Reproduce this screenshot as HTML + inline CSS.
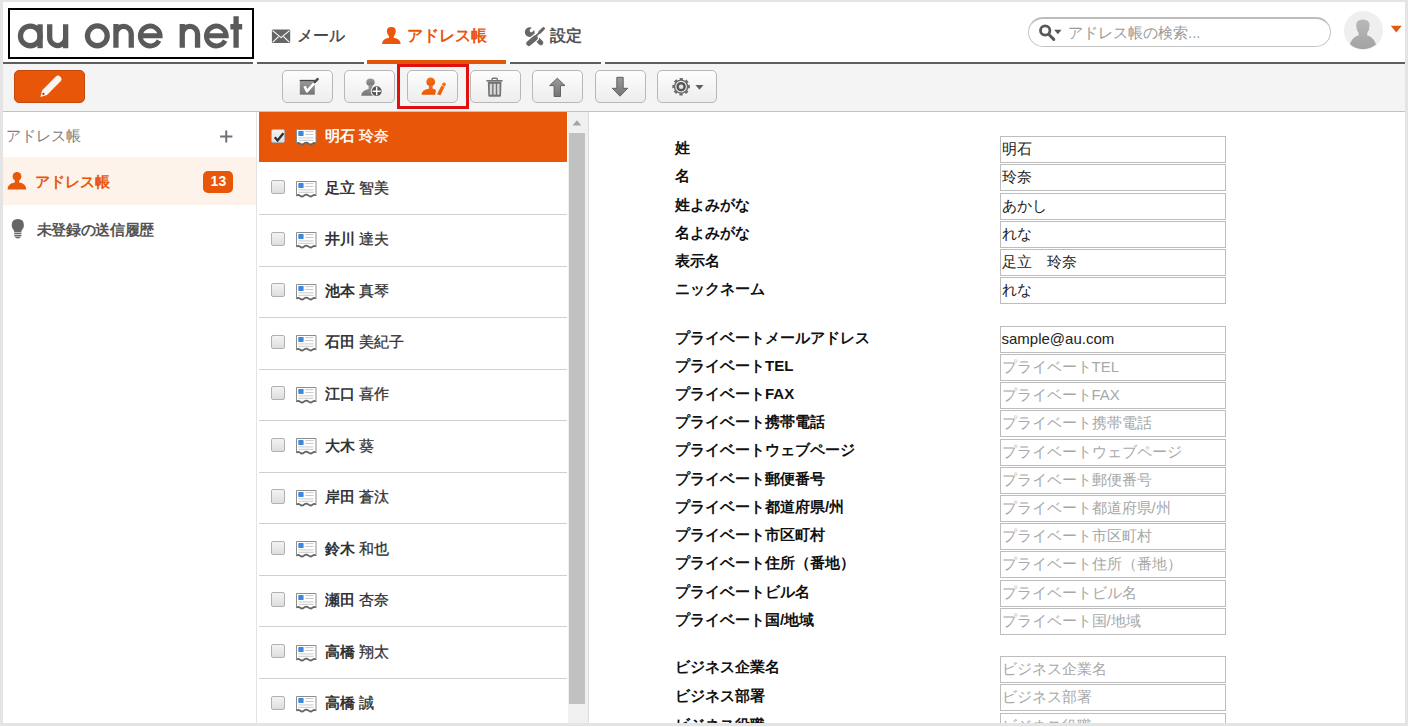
<!DOCTYPE html>
<html><head><meta charset="utf-8">
<style>
*{box-sizing:border-box;margin:0;padding:0}
html,body{width:1409px;height:727px;overflow:hidden;background:#fff;font-family:"Liberation Sans",sans-serif;}
#app{position:absolute;left:0;top:0;width:1409px;height:727px;background:#fff;clip-path:inset(2px 4px 4px 3px)}
#app>div,#app>svg{position:absolute}
/* header */
#logo{left:8px;top:7.5px;width:245.5px;height:51px;border:2.5px solid #000;background:#fff}
.uline{top:61.7px;height:2.2px;background:#5e5e5e}
.tab{top:27.3px;font-size:16px;color:#555;white-space:nowrap;line-height:18px}
#search{left:1028px;top:17px;width:303px;height:30px;border:1px solid #c4c4c4;border-top:2px solid #bcbcbc;border-radius:15px;background:#fff}
#sph{left:1068px;top:24px;font-size:15px;line-height:18px;color:#9a9a9a;white-space:nowrap}
#avatar{left:1343.5px;top:10.5px;width:39px;height:39px;border-radius:50%;background:#efefef;overflow:hidden}
/* toolbar */
#toolbar{left:0;top:64px;width:1409px;height:48px;background:#f4f4f4;border-bottom:1px solid #c2c2c2}
.btn{top:70.3px;width:51px;height:32.5px;border:1px solid #b8b8b8;border-radius:5px;background:linear-gradient(#fdfdfd,#ededed)}
#compose{left:14.3px;top:70.2px;width:71px;height:32.6px;background:#e8560a;border:1px solid #c24a0b;border-radius:5px}
#redbox{left:397.4px;top:64.2px;width:71.4px;height:44.4px;border:3px solid #e01010}
/* sidebar */
#sidebar{left:0;top:112px;width:257px;height:615px;background:#fff;border-right:1px solid #e4e4e4}
#sbsel{left:3px;top:157px;width:253px;height:47.5px;background:#fdf3eb}
.sbt{font-size:15px;line-height:18px;white-space:nowrap}
#badge{left:203.3px;top:171.2px;width:30.2px;height:21.4px;background:#e8560a;border-radius:5px;color:#fff;font-weight:bold;font-size:14px;line-height:21.4px;text-align:center}
/* list */
#list{left:257px;top:112px;width:332px;height:615px;background:#fff;border-right:1.5px solid #dcdcdc}
.row{left:258.5px;width:308px;height:51.55px;border-bottom:1px solid #d0d0d0;background:#fff}
.row.sel{background:#e8560a;border-bottom-color:#e8560a;height:50px}
.cb{position:absolute;left:12.5px;top:16.5px;width:14px;height:14.2px;border:1px solid #b0b0b0;border-radius:2px;background:linear-gradient(#f3f3f3,#dedede)}
.card{position:absolute;left:37.3px;top:17px}
.nm{position:absolute;left:66px;top:15.3px;font-size:15px;line-height:18px;color:#333;white-space:nowrap}
.row.sel .nm{color:#fff}
.nm b{font-weight:bold}
.nm i{font-style:normal;-webkit-text-stroke:0.3px currentColor}
#sbtrack{left:567.5px;top:112px;width:20px;height:611px;background:#f0f0f0}
#sbthumb{left:569px;top:133.2px;width:15.8px;height:571.2px;background:#c1c1c1}
/* form */
.lbl{left:675px;font-size:15px;font-weight:bold;color:#111;line-height:18px;white-space:nowrap}
.inp{left:1000px;width:225.5px;height:27px;border:1px solid #bdbdbd;background:#fff;font-size:15px;line-height:23.5px;padding-left:0.5px;color:#222;white-space:nowrap;overflow:hidden}
.ph{color:#a8a8a8}
</style></head>
<body>
<div style="position:absolute;left:0;top:0;width:1408px;height:726px;background:#e4e4e4"></div>
<div id="app">
  <div id="logo"></div>
  <div class="uline" style="left:0;width:253px"></div>
  <div class="uline" style="left:257px;width:106.5px"></div>
  <div class="uline" style="left:367.3px;width:138.7px;background:#e25508;height:4px;top:60px"></div>
  <div class="uline" style="left:510px;width:90.5px"></div>
  <div class="uline" style="left:604.5px;width:801px"></div>
  <div class="tab" style="left:297px;color:#444;-webkit-text-stroke:0.35px #444">メール</div>
  <div class="tab" style="left:406.8px;color:#e8570a;font-weight:bold">アドレス帳</div>
  <div class="tab" style="left:549.5px;font-weight:bold">設定</div>
  <div id="search"></div>
  <div id="sph">アドレス帳の検索...</div>
  <div id="avatar"></div>

  <div id="toolbar"></div>
  <div id="compose"></div>
  <div class="btn" style="left:281.8px"></div>
  <div class="btn" style="left:344.3px"></div>
  <div class="btn" style="left:407px"></div>
  <div class="btn" style="left:470.2px"></div>
  <div class="btn" style="left:532.4px"></div>
  <div class="btn" style="left:595.1px"></div>
  <div class="btn" style="left:657.3px;width:59.6px"></div>
  <div id="redbox"></div>

  <div id="sidebar"></div>
  <div id="sbsel"></div>
  <div class="sbt" style="left:6px;top:127px;color:#808080">アドレス帳</div>
  <div class="sbt" style="left:35px;top:173px;color:#e8570a;font-weight:bold">アドレス帳</div>
  <div class="sbt" style="left:36.6px;top:221px;color:#555;font-weight:bold;letter-spacing:-0.3px">未登録の送信履歴</div>
  <div id="badge">13</div>

  <div id="list"></div>
<div class="row sel" style="top:112.00px"><div class="cb"><svg width="14" height="14" viewBox="0 0 14 14" style="position:absolute;left:0;top:0"><path d="M2.8,7.2L5.6,10.4L11.4,3.2" fill="none" stroke="#2e2e2e" stroke-width="2.3"/></svg></div><svg class="card" width="21" height="17" viewBox="0 0 21 17"><path d="M0.5,0.5H20V14.8Q18.5,13 16.6,14.6Q14.6,16.4 12.6,14.6Q10.3,12.6 8,14.6Q6,16.4 4,14.6Q2,13 0.5,14.8Z" fill="#fff" stroke="#8c8c8c" stroke-width="1"/><path d="M0.8,14.8Q2,13 4,14.6Q6,16.4 8,14.6Q10.3,12.6 12.6,14.6Q14.6,16.4 16.6,14.6Q18.5,13 19.7,14.8" fill="none" stroke="#666" stroke-width="1.8"/><rect x="2.3" y="2.1" width="5.3" height="4.8" rx="0.6" fill="#3b88dc"/><path d="M9.2,2.6H17.5M9.2,5.5H17.5M2.3,8.9H17.5M2.3,11.3H17.5" stroke="#c4c4c4" stroke-width="0.9"/></svg><div class="nm"><b>明石</b> <i>玲奈</i></div></div>
<div class="row" style="top:163.55px"><div class="cb"></div><svg class="card" width="21" height="17" viewBox="0 0 21 17"><path d="M0.5,0.5H20V14.8Q18.5,13 16.6,14.6Q14.6,16.4 12.6,14.6Q10.3,12.6 8,14.6Q6,16.4 4,14.6Q2,13 0.5,14.8Z" fill="#fff" stroke="#8c8c8c" stroke-width="1"/><path d="M0.8,14.8Q2,13 4,14.6Q6,16.4 8,14.6Q10.3,12.6 12.6,14.6Q14.6,16.4 16.6,14.6Q18.5,13 19.7,14.8" fill="none" stroke="#666" stroke-width="1.8"/><rect x="2.3" y="2.1" width="5.3" height="4.8" rx="0.6" fill="#3b88dc"/><path d="M9.2,2.6H17.5M9.2,5.5H17.5M2.3,8.9H17.5M2.3,11.3H17.5" stroke="#c4c4c4" stroke-width="0.9"/></svg><div class="nm"><b>足立</b> <i>智美</i></div></div>
<div class="row" style="top:215.10px"><div class="cb"></div><svg class="card" width="21" height="17" viewBox="0 0 21 17"><path d="M0.5,0.5H20V14.8Q18.5,13 16.6,14.6Q14.6,16.4 12.6,14.6Q10.3,12.6 8,14.6Q6,16.4 4,14.6Q2,13 0.5,14.8Z" fill="#fff" stroke="#8c8c8c" stroke-width="1"/><path d="M0.8,14.8Q2,13 4,14.6Q6,16.4 8,14.6Q10.3,12.6 12.6,14.6Q14.6,16.4 16.6,14.6Q18.5,13 19.7,14.8" fill="none" stroke="#666" stroke-width="1.8"/><rect x="2.3" y="2.1" width="5.3" height="4.8" rx="0.6" fill="#3b88dc"/><path d="M9.2,2.6H17.5M9.2,5.5H17.5M2.3,8.9H17.5M2.3,11.3H17.5" stroke="#c4c4c4" stroke-width="0.9"/></svg><div class="nm"><b>井川</b> <i>達夫</i></div></div>
<div class="row" style="top:266.65px"><div class="cb"></div><svg class="card" width="21" height="17" viewBox="0 0 21 17"><path d="M0.5,0.5H20V14.8Q18.5,13 16.6,14.6Q14.6,16.4 12.6,14.6Q10.3,12.6 8,14.6Q6,16.4 4,14.6Q2,13 0.5,14.8Z" fill="#fff" stroke="#8c8c8c" stroke-width="1"/><path d="M0.8,14.8Q2,13 4,14.6Q6,16.4 8,14.6Q10.3,12.6 12.6,14.6Q14.6,16.4 16.6,14.6Q18.5,13 19.7,14.8" fill="none" stroke="#666" stroke-width="1.8"/><rect x="2.3" y="2.1" width="5.3" height="4.8" rx="0.6" fill="#3b88dc"/><path d="M9.2,2.6H17.5M9.2,5.5H17.5M2.3,8.9H17.5M2.3,11.3H17.5" stroke="#c4c4c4" stroke-width="0.9"/></svg><div class="nm"><b>池本</b> <i>真琴</i></div></div>
<div class="row" style="top:318.20px"><div class="cb"></div><svg class="card" width="21" height="17" viewBox="0 0 21 17"><path d="M0.5,0.5H20V14.8Q18.5,13 16.6,14.6Q14.6,16.4 12.6,14.6Q10.3,12.6 8,14.6Q6,16.4 4,14.6Q2,13 0.5,14.8Z" fill="#fff" stroke="#8c8c8c" stroke-width="1"/><path d="M0.8,14.8Q2,13 4,14.6Q6,16.4 8,14.6Q10.3,12.6 12.6,14.6Q14.6,16.4 16.6,14.6Q18.5,13 19.7,14.8" fill="none" stroke="#666" stroke-width="1.8"/><rect x="2.3" y="2.1" width="5.3" height="4.8" rx="0.6" fill="#3b88dc"/><path d="M9.2,2.6H17.5M9.2,5.5H17.5M2.3,8.9H17.5M2.3,11.3H17.5" stroke="#c4c4c4" stroke-width="0.9"/></svg><div class="nm"><b>石田</b> <i>美紀子</i></div></div>
<div class="row" style="top:369.75px"><div class="cb"></div><svg class="card" width="21" height="17" viewBox="0 0 21 17"><path d="M0.5,0.5H20V14.8Q18.5,13 16.6,14.6Q14.6,16.4 12.6,14.6Q10.3,12.6 8,14.6Q6,16.4 4,14.6Q2,13 0.5,14.8Z" fill="#fff" stroke="#8c8c8c" stroke-width="1"/><path d="M0.8,14.8Q2,13 4,14.6Q6,16.4 8,14.6Q10.3,12.6 12.6,14.6Q14.6,16.4 16.6,14.6Q18.5,13 19.7,14.8" fill="none" stroke="#666" stroke-width="1.8"/><rect x="2.3" y="2.1" width="5.3" height="4.8" rx="0.6" fill="#3b88dc"/><path d="M9.2,2.6H17.5M9.2,5.5H17.5M2.3,8.9H17.5M2.3,11.3H17.5" stroke="#c4c4c4" stroke-width="0.9"/></svg><div class="nm"><b>江口</b> <i>喜作</i></div></div>
<div class="row" style="top:421.30px"><div class="cb"></div><svg class="card" width="21" height="17" viewBox="0 0 21 17"><path d="M0.5,0.5H20V14.8Q18.5,13 16.6,14.6Q14.6,16.4 12.6,14.6Q10.3,12.6 8,14.6Q6,16.4 4,14.6Q2,13 0.5,14.8Z" fill="#fff" stroke="#8c8c8c" stroke-width="1"/><path d="M0.8,14.8Q2,13 4,14.6Q6,16.4 8,14.6Q10.3,12.6 12.6,14.6Q14.6,16.4 16.6,14.6Q18.5,13 19.7,14.8" fill="none" stroke="#666" stroke-width="1.8"/><rect x="2.3" y="2.1" width="5.3" height="4.8" rx="0.6" fill="#3b88dc"/><path d="M9.2,2.6H17.5M9.2,5.5H17.5M2.3,8.9H17.5M2.3,11.3H17.5" stroke="#c4c4c4" stroke-width="0.9"/></svg><div class="nm"><b>大木</b> <i>葵</i></div></div>
<div class="row" style="top:472.85px"><div class="cb"></div><svg class="card" width="21" height="17" viewBox="0 0 21 17"><path d="M0.5,0.5H20V14.8Q18.5,13 16.6,14.6Q14.6,16.4 12.6,14.6Q10.3,12.6 8,14.6Q6,16.4 4,14.6Q2,13 0.5,14.8Z" fill="#fff" stroke="#8c8c8c" stroke-width="1"/><path d="M0.8,14.8Q2,13 4,14.6Q6,16.4 8,14.6Q10.3,12.6 12.6,14.6Q14.6,16.4 16.6,14.6Q18.5,13 19.7,14.8" fill="none" stroke="#666" stroke-width="1.8"/><rect x="2.3" y="2.1" width="5.3" height="4.8" rx="0.6" fill="#3b88dc"/><path d="M9.2,2.6H17.5M9.2,5.5H17.5M2.3,8.9H17.5M2.3,11.3H17.5" stroke="#c4c4c4" stroke-width="0.9"/></svg><div class="nm"><b>岸田</b> <i>蒼汰</i></div></div>
<div class="row" style="top:524.40px"><div class="cb"></div><svg class="card" width="21" height="17" viewBox="0 0 21 17"><path d="M0.5,0.5H20V14.8Q18.5,13 16.6,14.6Q14.6,16.4 12.6,14.6Q10.3,12.6 8,14.6Q6,16.4 4,14.6Q2,13 0.5,14.8Z" fill="#fff" stroke="#8c8c8c" stroke-width="1"/><path d="M0.8,14.8Q2,13 4,14.6Q6,16.4 8,14.6Q10.3,12.6 12.6,14.6Q14.6,16.4 16.6,14.6Q18.5,13 19.7,14.8" fill="none" stroke="#666" stroke-width="1.8"/><rect x="2.3" y="2.1" width="5.3" height="4.8" rx="0.6" fill="#3b88dc"/><path d="M9.2,2.6H17.5M9.2,5.5H17.5M2.3,8.9H17.5M2.3,11.3H17.5" stroke="#c4c4c4" stroke-width="0.9"/></svg><div class="nm"><b>鈴木</b> <i>和也</i></div></div>
<div class="row" style="top:575.95px"><div class="cb"></div><svg class="card" width="21" height="17" viewBox="0 0 21 17"><path d="M0.5,0.5H20V14.8Q18.5,13 16.6,14.6Q14.6,16.4 12.6,14.6Q10.3,12.6 8,14.6Q6,16.4 4,14.6Q2,13 0.5,14.8Z" fill="#fff" stroke="#8c8c8c" stroke-width="1"/><path d="M0.8,14.8Q2,13 4,14.6Q6,16.4 8,14.6Q10.3,12.6 12.6,14.6Q14.6,16.4 16.6,14.6Q18.5,13 19.7,14.8" fill="none" stroke="#666" stroke-width="1.8"/><rect x="2.3" y="2.1" width="5.3" height="4.8" rx="0.6" fill="#3b88dc"/><path d="M9.2,2.6H17.5M9.2,5.5H17.5M2.3,8.9H17.5M2.3,11.3H17.5" stroke="#c4c4c4" stroke-width="0.9"/></svg><div class="nm"><b>瀬田</b> <i>杏奈</i></div></div>
<div class="row" style="top:627.50px"><div class="cb"></div><svg class="card" width="21" height="17" viewBox="0 0 21 17"><path d="M0.5,0.5H20V14.8Q18.5,13 16.6,14.6Q14.6,16.4 12.6,14.6Q10.3,12.6 8,14.6Q6,16.4 4,14.6Q2,13 0.5,14.8Z" fill="#fff" stroke="#8c8c8c" stroke-width="1"/><path d="M0.8,14.8Q2,13 4,14.6Q6,16.4 8,14.6Q10.3,12.6 12.6,14.6Q14.6,16.4 16.6,14.6Q18.5,13 19.7,14.8" fill="none" stroke="#666" stroke-width="1.8"/><rect x="2.3" y="2.1" width="5.3" height="4.8" rx="0.6" fill="#3b88dc"/><path d="M9.2,2.6H17.5M9.2,5.5H17.5M2.3,8.9H17.5M2.3,11.3H17.5" stroke="#c4c4c4" stroke-width="0.9"/></svg><div class="nm"><b>高橋</b> <i>翔太</i></div></div>
<div class="row" style="top:679.05px"><div class="cb"></div><svg class="card" width="21" height="17" viewBox="0 0 21 17"><path d="M0.5,0.5H20V14.8Q18.5,13 16.6,14.6Q14.6,16.4 12.6,14.6Q10.3,12.6 8,14.6Q6,16.4 4,14.6Q2,13 0.5,14.8Z" fill="#fff" stroke="#8c8c8c" stroke-width="1"/><path d="M0.8,14.8Q2,13 4,14.6Q6,16.4 8,14.6Q10.3,12.6 12.6,14.6Q14.6,16.4 16.6,14.6Q18.5,13 19.7,14.8" fill="none" stroke="#666" stroke-width="1.8"/><rect x="2.3" y="2.1" width="5.3" height="4.8" rx="0.6" fill="#3b88dc"/><path d="M9.2,2.6H17.5M9.2,5.5H17.5M2.3,8.9H17.5M2.3,11.3H17.5" stroke="#c4c4c4" stroke-width="0.9"/></svg><div class="nm"><b>高橋</b> <i>誠</i></div></div>
  <div id="sbtrack"></div>
  <div id="sbthumb"></div>

<div class="lbl" style="top:139.1px">姓</div><div class="inp" style="top:136.2px">明石</div>
<div class="lbl" style="top:167.4px">名</div><div class="inp" style="top:164.4px">玲奈</div>
<div class="lbl" style="top:195.6px">姓よみがな</div><div class="inp" style="top:192.7px">あかし</div>
<div class="lbl" style="top:223.8px">名よみがな</div><div class="inp" style="top:220.9px">れな</div>
<div class="lbl" style="top:252.1px">表示名</div><div class="inp" style="top:249.2px">足立　玲奈</div>
<div class="lbl" style="top:280.4px">ニックネーム</div><div class="inp" style="top:277.4px">れな</div>
<div class="lbl" style="top:328.5px">プライベートメールアドレス</div><div class="inp" style="top:325.6px">sample@au.com</div>
<div class="lbl" style="top:356.7px">プライベートTEL</div><div class="inp ph" style="top:353.8px">プライベートTEL</div>
<div class="lbl" style="top:384.9px">プライベートFAX</div><div class="inp ph" style="top:382.0px">プライベートFAX</div>
<div class="lbl" style="top:413.2px">プライベート携帯電話</div><div class="inp ph" style="top:410.3px">プライベート携帯電話</div>
<div class="lbl" style="top:441.4px">プライベートウェブページ</div><div class="inp ph" style="top:438.5px">プライベートウェブページ</div>
<div class="lbl" style="top:469.6px">プライベート郵便番号</div><div class="inp ph" style="top:466.7px">プライベート郵便番号</div>
<div class="lbl" style="top:497.8px">プライベート都道府県/州</div><div class="inp ph" style="top:494.9px">プライベート都道府県/州</div>
<div class="lbl" style="top:526.0px">プライベート市区町村</div><div class="inp ph" style="top:523.1px">プライベート市区町村</div>
<div class="lbl" style="top:554.3px">プライベート住所（番地）</div><div class="inp ph" style="top:551.4px">プライベート住所（番地）</div>
<div class="lbl" style="top:582.5px">プライベートビル名</div><div class="inp ph" style="top:579.6px">プライベートビル名</div>
<div class="lbl" style="top:610.7px">プライベート国/地域</div><div class="inp ph" style="top:607.8px">プライベート国/地域</div>
<div class="lbl" style="top:658.4px">ビジネス企業名</div><div class="inp ph" style="top:655.5px">ビジネス企業名</div>
<div class="lbl" style="top:687.0px">ビジネス部署</div><div class="inp ph" style="top:684.1px">ビジネス部署</div>
<div class="lbl" style="top:715.6px">ビジネス役職</div><div class="inp ph" style="top:712.7px">ビジネス役職</div>
<svg style="left:0;top:0;width:1409px;height:727px" width="1409" height="727" viewBox="0 0 1409 727">
 <defs>
  <linearGradient id="gg" x1="0" y1="0" x2="0" y2="1"><stop offset="0" stop-color="#9a9a9a"/><stop offset="1" stop-color="#757575"/></linearGradient>
  <linearGradient id="og" x1="0" y1="0" x2="0" y2="1"><stop offset="0" stop-color="#ff6a10"/><stop offset="1" stop-color="#e35a0c"/></linearGradient>
  <linearGradient id="av" x1="0" y1="0" x2="0" y2="1"><stop offset="0" stop-color="#b9b9b9"/><stop offset="1" stop-color="#a3a3a3"/></linearGradient>
 </defs>
 <!-- logo -->
 <g fill="none" stroke="#5a5a5a" stroke-width="5.3">
  <circle cx="30.3" cy="35.9" r="9.85"/>
  <path d="M40.1,24.3V48.2"/>
  <path d="M49.7,24.3V37.6A7.97,7.97 0 0 0 65.65,37.6M65.65,24.3V48.2"/>
  <circle cx="97.35" cy="35.85" r="9.9"/>
  <path d="M115.95,23.9V47.8M131.25,47.8V34A7.65,7.65 0 0 0 115.95,34"/>
  <path d="M140.6,35.7H160.1A9.9,9.9 0 1 0 159,40.6" stroke-width="4.9"/>
  <path d="M182.25,23.9V47.8M197.55,47.8V34A7.65,7.65 0 0 0 182.25,34"/>
  <path d="M206.6,35.7H226.2A9.9,9.9 0 1 0 225.1,40.6" stroke-width="4.9"/>
  <path d="M236.1,16.2V47.8M230.4,26.75H242.2"/>
 </g>
 <!-- mail icon -->
 <rect x="271.9" y="29.6" width="18.3" height="13.3" rx="1" fill="#676767"/>
 <path d="M272.6,30.6L281.05,37.6L289.5,30.6M272.8,42.2L278.6,36.6M289.3,42.2L283.5,36.6" fill="none" stroke="#fff" stroke-width="1.1"/>
 <!-- person tab -->
 <g fill="#e8570a">
  <path d="M386.9,31.2Q386.7,26.9 391.35,26.9Q396,26.9 395.8,31.2Q395.6,34.6 393.6,36.4H389.1Q387.1,34.6 386.9,31.2Z"/>
  <path d="M389,35.5H393.7V37.8Q400.3,38.8 400.7,44H382Q382.4,38.8 389,37.8Z"/>
 </g>
 <!-- tools -->
 <g fill="#676767" stroke="#676767">
  <circle cx="529.7" cy="32.1" r="4.9" stroke="none"/>
  <path d="M531.3,30.5L536,25.8" stroke="#fff" stroke-width="3.3" stroke-linecap="round"/>
  <path d="M531.5,34L540.2,42.2" stroke-width="4.6"/>
  <path d="M537.8,39.6L540.9,42.7" stroke-width="4.8" stroke-linecap="round"/>
  <path d="M543.8,28.4L534.6,37.6" stroke="#fff" stroke-width="4"/>
  <path d="M535.3,37.9L528.9,43.4" stroke="#fff" stroke-width="7.6" stroke-linecap="round"/>
  <path d="M543.6,28.6L534.6,37.4" stroke-width="1.9"/>
  <path d="M543.5,28.5L539.8,32.1" stroke-width="3" stroke-linecap="round"/>
  <path d="M535.2,38L528.9,43.4" stroke-width="5.2" stroke-linecap="round"/>
 </g>
 <!-- search icon -->
 <circle cx="1045.2" cy="30.5" r="4.7" fill="none" stroke="#585858" stroke-width="2.8"/>
 <path d="M1049.6,35.2L1053.8,39.4" stroke="#585858" stroke-width="3" stroke-linecap="round"/>
 <path d="M1054.1,29.8H1061.6L1057.85,34.2Z" fill="#585858"/>
 <!-- avatar -->
 <g clip-path="url(#avclip)">
  <clipPath id="avclip"><circle cx="1363" cy="30" r="19.3"/></clipPath>
  <path d="M1356.2,25.5Q1356,19.4 1362.8,19.4Q1369.8,19.4 1369.6,25.5Q1369.4,30.5 1367.2,33V35.2Q1375.5,37.5 1377,48.9H1348.8Q1350.3,37.5 1358.6,35.2V33Q1356.4,30.5 1356.2,25.5Z" fill="url(#av)"/>
 </g>
 <path d="M1390.8,25.8H1401.8L1396.3,32.5Z" fill="#e8570a"/>
 <!-- compose pencil -->
 <path d="M42.2,90.2L55.6,76.8Q58,74.4 60.4,76.8Q62.8,79.2 60.4,81.6L47,95L40.4,97Z" fill="#fff5ef"/>
 <circle cx="43.4" cy="93.9" r="1.1" fill="#8a3a10"/>
 <!-- btn1 check icon -->
 <rect x="299.8" y="79.9" width="15" height="14.8" fill="url(#gg)"/>
 <rect x="299.8" y="79.9" width="15" height="1.2" fill="#444"/>
 <path d="M304.6,86.2L306.9,91.3L316.6,80.6" fill="none" stroke="#fff" stroke-width="2.6" stroke-linejoin="round"/>
 <path d="M314.6,82.2L317.6,79.2" stroke="#4a4a4a" stroke-width="2.6" stroke-linecap="round"/>
 <!-- btn2 person add -->
 <g fill="url(#gg)">
  <ellipse cx="370.5" cy="82.3" rx="4.2" ry="3.8"/>
  <path d="M368.6,85H372.5V88.3Q374.8,89.4 376,91V95.8H361.2Q361.4,90.8 368.6,89Z"/>
 </g>
 <circle cx="376.7" cy="91.2" r="5.9" fill="#f2f2f2"/>
 <circle cx="376.7" cy="91.2" r="4.9" fill="#585858"/>
 <path d="M372.6,91.2H380.8M376.7,87.1V95.3" stroke="#fff" stroke-width="1.4"/>
 <!-- btn3 person edit -->
 <g fill="url(#og)">
  <ellipse cx="430.7" cy="81.9" rx="4.4" ry="4.4"/>
  <path d="M428.9,85H432.6V88.6Q435.4,89.2 436,90.5L435.2,94.7H421.5Q421.7,90 428.9,88.8Z"/>
  <path d="M437.3,93.8L441.6,85.3L444.6,86.9L440.3,95.4Z"/>
  <path d="M441.9,84.7L442.6,83.3Q443.4,82 444.7,82.7L445.1,82.9Q446.3,83.7 445.6,85L444.9,86.4Z"/>
 </g>
 <path d="M436.6,95L437.2,93.6L438.6,94.3Z" fill="#c9a080"/>
 <!-- btn4 trash -->
 <g fill="#747474">
  <path d="M491.4,80.2V79Q491.4,77.5 493,77.5H496.3Q497.9,77.5 497.9,79V80.2H496.5V79.1H492.8V80.2Z"/>
  <rect x="486.3" y="79.9" width="16.4" height="1.6" rx="0.6"/>
  <path d="M487.8,81.4H501.5L501,95.7Q500.9,96.8 499.8,96.8H489.5Q488.4,96.8 488.3,95.7Z"/>
 </g>
 <g fill="#d9d9d9">
  <rect x="489.8" y="83.7" width="2.3" height="11.1" rx="0.8"/>
  <rect x="493.5" y="83.7" width="2.3" height="11.1" rx="0.8"/>
  <rect x="497.2" y="83.7" width="2.3" height="11.1" rx="0.8"/>
 </g>
 <!-- btn5 up arrow -->
 <path d="M557.3,78.2L565,85.6H560.5V96.5H554.1V85.6H549.6Z" fill="url(#gg)" stroke="#5a5a5a" stroke-width="0.9" stroke-linejoin="round"/>
 <!-- btn6 down arrow -->
 <path d="M620,96.2L627.7,88.3H623.2V77.3H616.8V88.3H612.3Z" fill="url(#gg)" stroke="#5a5a5a" stroke-width="0.9" stroke-linejoin="round"/>
 <!-- btn7 gear -->
 <g transform="translate(681.1,86.7)">
  <circle r="7.2" fill="#6a6a6a"/>
  <circle r="7.7" fill="none" stroke="#6a6a6a" stroke-width="2.2" stroke-dasharray="3.2 2.85" transform="rotate(-12)" stroke-linejoin="round"/>
  <circle r="5.3" fill="none" stroke="#ececec" stroke-width="1.1"/>
  <circle r="3.4" fill="none" stroke="#505050" stroke-width="1.6"/>
  <circle r="2.3" fill="#e4e4e4"/>
 </g>
 <path d="M695.4,85H703.5L699.45,89.7Z" fill="#606060"/>
 <!-- sidebar person -->
 <g fill="#e8570a">
  <ellipse cx="17" cy="176.6" rx="4.4" ry="4.6"/>
  <path d="M14.8,180H19.2V182.4Q26,183.2 26.2,189.4H7.6Q7.8,183.2 14.8,182.4Z"/>
 </g>
 <!-- plus -->
 <path d="M220.1,136.6H232.4M226.25,130.5V142.6" stroke="#6e7178" stroke-width="2"/>
 <!-- bulb -->
 <path d="M17.8,219Q23.9,219 23.9,225.4Q23.9,228.4 21.6,230.6L21.3,232.3H14.3L14,230.6Q11.7,228.4 11.7,225.4Q11.7,219 17.8,219Z" fill="#666"/>
 <rect x="14.2" y="232.8" width="7.2" height="1.4" fill="#666"/>
 <rect x="14.2" y="234.9" width="7.2" height="1.4" fill="#666"/>
 <path d="M14.8,236.8H20.8Q20.3,238.5 17.8,238.5Q15.3,238.5 14.8,236.8Z" fill="#666"/>
 <!-- scrollbar arrow -->
 <path d="M572.6,125.4H581.3L576.95,120.2Z" fill="#a3a3a3"/>
</svg>

</div>
</body></html>
